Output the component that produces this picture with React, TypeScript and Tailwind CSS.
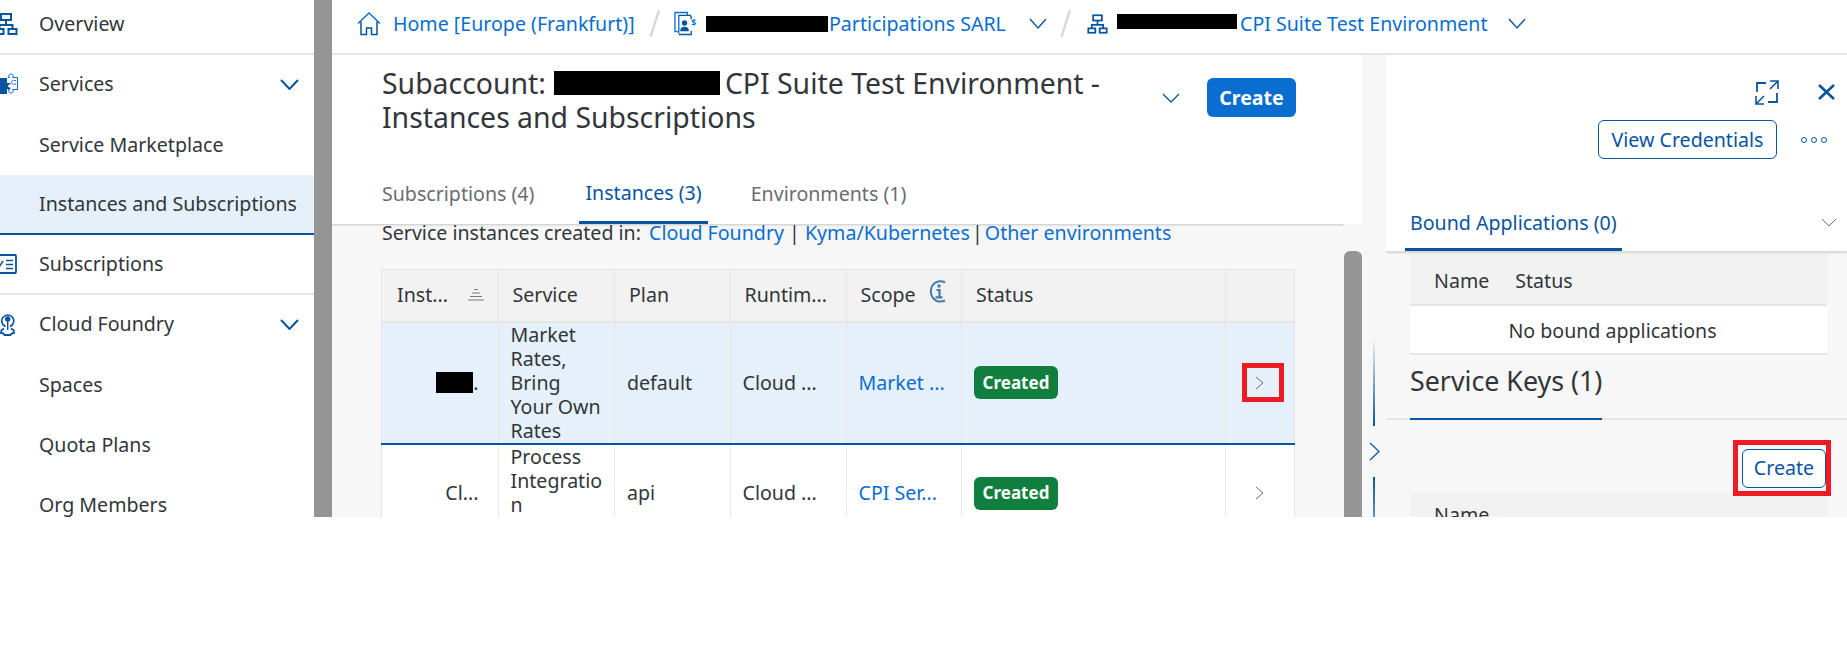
// drawn icons, SAP icon font isn't available
function Chevron({ w, h, down = true, color = "#0854a0", sw = 1.3, className = "" }: { w: number; h: number; down?: boolean; color?: string; sw?: number; className?: string }) {
  const d = down ? `M1 1L${w / 2} ${h - 1}L${w - 1} 1` : `M1 1L${w - 1} ${h / 2}L1 ${h - 1}`;
  return (
    <svg width={w} height={h} viewBox={`0 0 ${w} ${h}`} fill="none" stroke={color} strokeWidth={sw} className={`shrink-0 ${className}`}>
      <path d={d} />
    </svg>
  );
}

function TreeIcon({ className }: { className?: string }) {
  return (
    <svg viewBox="0 0 24 24" fill="none" stroke="#0854a0" strokeWidth="2" className={className}>
      <rect x="7" y="2" width="10" height="6" />
      <path d="M12 8v5M5.500 17v-4h13v4" />
      <rect x="1.500" y="17" width="8" height="5" />
      <rect x="14.500" y="17" width="8" height="5" />
    </svg>
  );
}

function PuzzleIcon() {
  return (
    <svg viewBox="0 0 24 24" className="w-[24px] h-[24px] -ml-[6px] mr-[21px] shrink-0" fill="none" stroke="#0a6ed1" strokeWidth="1">
      <path d="M14 5.500h1.300a2.200 2.200 0 1 1 3.400 0h4.800v12h-4.800a2.200 2.200 0 1 1-3.400 0H14" />
      <path d="M22 8.500h-1.500a2 2 0 1 0 0 3.500H22" />
      <path d="M0 6h13v5h3.500v1.500H15a2 2 0 0 0 0 3h1.500V17H13v5H0z" fill="#0854a0" stroke="none" />
    </svg>
  );
}

function ChecklistIcon() {
  return (
    <svg viewBox="0 0 24 20" className="w-[24px] h-[20px] -ml-[7px] mr-[22px] shrink-0" fill="none" stroke="#0854a0" strokeWidth="1.800">
      <rect x="1" y="1" width="22" height="18" rx="1" />
      <path d="M3 11l2.500 3L10 7M13 6.500h7M13 10.500h7M13 14.500h7" strokeWidth="1.500" />
    </svg>
  );
}

function CloudFoundryIcon() {
  return (
    <svg viewBox="0 0 16 24" className="w-[16px] h-[24px] mr-[23px] shrink-0" fill="none" stroke="#0854a0" strokeWidth="1.600">
      <path d="M5.500 14.500A6 6 0 1 1 10 14.500" />
      <circle cx="7.700" cy="7" r="2.700" fill="#0854a0" stroke="none" />
      <path d="M7.700 9v9" strokeWidth="1.400" />
      <path d="M4 16.500l-2.500 1.500-.5 3 2.500.5 1 1.500h6l1-1.500 2.500-.5-.5-3-2.500-1.500" strokeWidth="1.800" />
    </svg>
  );
}

function HomeIcon() {
  return (
    <svg viewBox="0 0 24 25" className="w-[24px] h-[25px] shrink-0" fill="none" stroke="#0a6ed1" strokeWidth="1.500">
      <path d="M1 12.500L12 2l11 10.500" />
      <path d="M4 10.500V23.500h5.500V17h5v6.500H20V10.500" stroke="#0854a0" />
    </svg>
  );
}

function AccountIcon() {
  return (
    <svg viewBox="0 0 24 25" className="w-[23px] h-[25px] shrink-0" fill="none" stroke="#0854a0" strokeWidth="1.400">
      <path d="M5 23V4h-.5M4 21H1V1h13v3" stroke="#0a6ed1" />
      <path d="M5 4h12l1 2v2M5 24h13v-4" />
      <circle cx="11" cy="12" r="2.800" fill="#0854a0" stroke="none" />
      <path d="M6.500 20.500c0-3.500 2-4.500 4.500-4.500s4.500 1 4.500 4.500z" fill="#0854a0" stroke="none" />
      <text x="18" y="15" fontSize="9" fontWeight="700" fill="#0a6ed1" stroke="none" fontFamily="Noto Sans, sans-serif">$</text>
    </svg>
  );
}

function InfoIcon() {
  return (
    <svg viewBox="0 0 20 24" className="w-[20px] h-[24px] shrink-0" fill="none" stroke="#427cac" strokeWidth="2">
      <path d="M18 2.500A9.500 9.500 0 0 0 4 10c-1 6 3.500 11 8 11.500 2 .2 4-.1 6-1" />
      <circle cx="12" cy="6" r="1.700" fill="#427cac" stroke="none" />
      <path d="M9.500 10h3v7M8.500 17.300h7" strokeWidth="2.200" />
    </svg>
  );
}

function SortIcon() {
  return (
    <svg viewBox="0 0 16 12" className="w-[16px] h-[12px] shrink-0" fill="none" stroke="#6a6d70" strokeWidth="0.900">
      <path d="M6 .5h4M4 4h8M2 7.500h12M0 11h16" />
    </svg>
  );
}

function ExpandIcon() {
  return (
    <svg viewBox="0 0 24 25" className="w-[24px] h-[25px] shrink-0" fill="none" stroke="#0854a0" strokeWidth="1.800">
      <path d="M11 3H2v9M13 22h9v-9" />
      <path d="M15 1h8v8M23 1l-8 8M1 16v8h8M1 24l8-8" strokeWidth="1.600" />
    </svg>
  );
}

function CloseIcon() {
  return (
    <svg viewBox="0 0 17 16" className="w-[17px] h-[16px] shrink-0" fill="none" stroke="#0854a0" strokeWidth="2.600">
      <path d="M1 1l15 14M16 1L1 15" />
    </svg>
  );
}

function Slash() {
  return (
    <svg viewBox="0 0 11 27" className="w-[11px] h-[27px] shrink-0">
      <path d="M10 0L1.500 27" stroke="#d9d9d9" strokeWidth="2.500" />
    </svg>
  );
}

function SideRow({ label, icon, open, selected, border }: { label: string; icon?: React.ReactNode; open?: boolean; selected?: boolean; border?: boolean }) {
  return (
    <div className={`flex items-center h-[60px] shrink-0 pr-[15px] ${icon ? "" : "pl-[39px]"} ${open ? "pb-[2px]" : ""} ${selected ? "bg-[#e5f0fa] border-b-2 border-[#0854a0]" : ""} ${border ? "border-b-2 border-[#e5e5e5]" : ""}`}>
      {icon}
      <span className="flex-1 whitespace-nowrap">{label}</span>
      {open && <Chevron w={19} h={11} sw={2} />}
    </div>
  );
}

function Sidebar() {
  return (
    <div className="w-[314px] shrink-0 flex flex-col overflow-hidden bg-white">
      <div className="flex items-center h-[55px] shrink-0 pb-[6px] border-b-2 border-[#e5e5e5]">
        <TreeIcon className="w-[24px] h-[24px] -ml-[6px] mr-[21px] shrink-0" />
        <span>Overview</span>
      </div>
      <SideRow label="Services" icon={<PuzzleIcon />} open />
      <SideRow label="Service Marketplace" />
      <SideRow label="Instances and Subscriptions" selected />
      <SideRow label="Subscriptions" icon={<ChecklistIcon />} border />
      <SideRow label="Cloud Foundry" icon={<CloudFoundryIcon />} open />
      <SideRow label="Spaces" />
      <SideRow label="Quota Plans" />
      <SideRow label="Org Members" />
    </div>
  );
}

function Breadcrumbs() {
  return (
    <div className="h-[55px] shrink-0 flex items-center pl-[25px] pb-[6px] border-b-2 border-[#e5e5e5] text-[#0a6ed1] bg-white whitespace-nowrap">
      <HomeIcon />
      <span className="ml-[12px] w-[240px]">Home [Europe (Frankfurt)]</span>
      <span className="ml-[16px]"><Slash /></span>
      <span className="ml-[14px]"><AccountIcon /></span>
      <span className="ml-[9px] inline-block w-[122px] h-[16px] bg-black" />
      <span className="ml-[1px] w-[181px]">Participations SARL</span>
      <Chevron w={18} h={11} className="ml-[19px]" />
      <span className="ml-[13px]"><Slash /></span>
      <TreeIcon className="ml-[16px] w-[21px] h-[24px] shrink-0" />
      <span className="ml-[9px] inline-block w-[120px] h-[15px] bg-black -translate-y-[2px]" />
      <span className="ml-[3px] w-[250px]">CPI Suite Test Environment</span>
      <Chevron w={18} h={11} className="ml-[18px]" />
    </div>
  );
}

function Badge() {
  return (
    <span className="inline-flex items-center justify-center w-[84px] h-[33px] rounded-[6px] bg-[#107e3e] text-white font-bold text-[17px]">Created</span>
  );
}

const cell = "border-r border-[#e5e5e5] align-middle";

function InstancesTable() {
  return (
    <table className="table-fixed border-collapse w-[914px] border-l border-r border-[#e5e5e5]">
      <colgroup>
        <col className="w-[116.500px]" />
        <col className="w-[116.500px]" />
        <col className="w-[115.500px]" />
        <col className="w-[116px]" />
        <col className="w-[115.500px]" />
        <col className="w-[263.500px]" />
        <col />
      </colgroup>
      <thead>
        <tr className="h-[52px] bg-[#f2f2f2] border-t border-b-2 border-[#e5e5e5] text-left">
          <th className={`${cell} font-normal pl-[15px] pr-[14px]`}>
            <div className="flex items-center justify-between"><span>Inst...</span><SortIcon /></div>
          </th>
          <th className={`${cell} font-normal pl-[14px]`}>Service</th>
          <th className={`${cell} font-normal pl-[14px]`}>Plan</th>
          <th className={`${cell} font-normal pl-[14px]`}>Runtim...</th>
          <th className={`${cell} font-normal pl-[14px]`}>
            <div className="flex items-center gap-[11px]"><span>Scope</span><span className="-mt-[6px]"><InfoIcon /></span></div>
          </th>
          <th className={`${cell} font-normal pl-[14px]`}>Status</th>
          <th />
        </tr>
      </thead>
      <tbody>
        <tr className="h-[122px] bg-[#e5f0fa] border-b-2 border-[#0854a0]">
          <td className={`${cell} pr-[19px] text-right`}>
            <div className="flex items-center justify-end">
              <span className="inline-block w-[37px] h-[21px] bg-black" />
              <span>.</span>
            </div>
          </td>
          <td className={`${cell} pl-[12px] pr-[8px]`}>Market Rates, Bring Your Own Rates</td>
          <td className={`${cell} pl-[12px]`}>default</td>
          <td className={`${cell} pl-[12px]`}>Cloud ...</td>
          <td className={`${cell} pl-[12px] text-[#0a6ed1]`}>Market ...</td>
          <td className={`${cell} pl-[12px]`}><Badge /></td>
          <td className="align-middle">
            <div className="flex justify-center">
              <span className="ml-[6px] pr-[6px] flex items-center justify-center w-[42px] h-[39px] border-[5px] border-[#ed1c24]">
                <Chevron w={9} h={14} down={false} color="#6a6d70" sw={1} />
              </span>
            </div>
          </td>
        </tr>
        <tr className="h-[98px] bg-white">
          <td className={`${cell} pr-[19px] text-right`}>Cl...</td>
          <td className={`${cell} pl-[12px] pr-[8px] !align-top`}>Process Integratio<br />n</td>
          <td className={`${cell} pl-[12px]`}>api</td>
          <td className={`${cell} pl-[12px]`}>Cloud ...</td>
          <td className={`${cell} pl-[12px] text-[#0a6ed1]`}>CPI Ser...</td>
          <td className={`${cell} pl-[12px]`}><Badge /></td>
          <td className="align-middle">
            <div className="flex justify-center">
              <Chevron w={9} h={14} down={false} color="#6a6d70" sw={1} />
            </div>
          </td>
        </tr>
      </tbody>
    </table>
  );
}

function InstancesPane() {
  return (
    <div className="w-[1012px] shrink-0 flex flex-col bg-[#f7f7f7] overflow-hidden">
      <div className="relative z-10 h-[169px] shrink-0 bg-white shadow-[0_1px_2px_rgba(0,0,0,0.2)] pl-[50px]">
        <div className="flex items-start pt-[11px] h-[110px]">
          <div className="w-[780px] text-[28.400px] leading-[34px]">
            <div className="flex items-center whitespace-nowrap">
              <span>Subaccount:</span>
              <span className="ml-[8px] inline-block w-[166px] h-[24px] bg-black" />
              <span className="ml-[5px]">CPI Suite Test Environment -</span>
            </div>
            <div className="whitespace-nowrap">Instances and Subscriptions</div>
          </div>
          <Chevron w={18} h={10} className="mt-[27px]" />
          <button className="ml-[27px] mt-[12px] w-[89px] h-[39px] rounded-[6px] bg-[#0a6ed1] text-white font-bold">Create</button>
        </div>
        <div className="flex h-[59px] items-stretch">
          <div className="flex items-center pb-[1px] text-[#6a6d70] whitespace-nowrap">Subscriptions (4)</div>
          <div className="ml-[45px] flex items-center px-[6px] text-[#0854a0] border-b-[3px] border-[#0854a0] whitespace-nowrap">Instances (3)</div>
          <div className="ml-[43px] flex items-center pb-[1px] text-[#6a6d70] whitespace-nowrap">Environments (1)</div>
        </div>
      </div>
      <div className="shrink-0 pl-[50px] -mt-[3px] mb-[24px] leading-[24px] whitespace-nowrap">
        Service instances created in: <span className="ml-[3px] text-[#0a6ed1]">Cloud Foundry</span> | <span className="text-[#0a6ed1]">Kyma/Kubernetes</span> <span className="-ml-[3px]">|</span> <span className="-ml-[3px] text-[#0a6ed1]">Other environments</span>
      </div>
      <div className="shrink-0 pl-[49px]">
        <InstancesTable />
      </div>
    </div>
  );
}

function Splitter() {
  return (
    <div className="w-[24px] shrink-0 bg-[#f7f7f7] flex flex-col items-center pt-[282px]">
      <div className="w-[2px] h-[89px] shrink-0 bg-gradient-to-b from-transparent to-[#0854a0]" />
      <div className="h-[51px] shrink-0 flex items-center">
        <Chevron w={11} h={19} down={false} sw={1.2} />
      </div>
      <div className="w-[2px] h-[40px] shrink-0 bg-gradient-to-b from-[#0854a0] to-[#5a93c8]" />
    </div>
  );
}

function DetailPane() {
  return (
    <div className="flex-1 flex flex-col bg-[#f7f7f7] overflow-hidden">
      <div className="relative z-10 h-[197px] shrink-0 bg-white border-b border-[#d9d9d9] shadow-[0_1px_2px_rgba(0,0,0,0.15)] flex flex-col">
        <div className="flex items-center justify-end h-[50px] pt-[24px] pr-[12px]">
          <ExpandIcon />
          <span className="ml-[39px]"><CloseIcon /></span>
        </div>
        <div className="flex items-center justify-end mt-[15px] pr-[20px]">
          <button className="w-[179px] h-[39px] rounded-[6px] border border-[#0854a0] text-[#0854a0] bg-white">View Credentials</button>
          <span className="ml-[24px] flex gap-[4px]">
            <span className="w-[6px] h-[6px] rounded-full border-[1.500px] border-[#0854a0]" />
            <span className="w-[6px] h-[6px] rounded-full border-[1.500px] border-[#0854a0]" />
            <span className="w-[6px] h-[6px] rounded-full border-[1.500px] border-[#0854a0]" />
          </span>
        </div>
        <div className="flex mt-[auto] justify-between items-stretch h-[60px] pl-[20px] pr-[10px]">
          <div className="flex items-center pt-[6px] px-[5px] -ml-[1px] text-[#0854a0] border-b-[3px] border-[#0854a0] whitespace-nowrap">Bound Applications (0)</div>
          <span className="self-center pt-[2px]"><Chevron w={16} h={9} color="#6a6d70" sw={1} /></span>
        </div>
      </div>
      <div className="shrink-0 pl-[24px] pr-[20px] pt-[2px]">
        <div className="h-[52px] pt-[3px] bg-[#f2f2f2] border-b-2 border-[#e5e5e5] flex items-center pl-[24px] gap-[26px]">
          <span>Name</span><span>Status</span>
        </div>
        <div className="h-[49px] pt-[2px] pr-[12px] bg-white border-b-2 border-[#e5e5e5] flex items-center justify-center">No bound applications</div>
      </div>
      <div className="shrink-0 border-b-2 border-[#e5e5e5] h-[65px] flex items-stretch pl-[24px]">
        <div className="flex items-center pb-[12px] text-[26.800px] border-b-2 -mb-[2px] border-[#0854a0] whitespace-nowrap">Service Keys (1)</div>
      </div>
      <div className="shrink-0 flex justify-end pr-[16px] pt-[20px]">
        <div className="relative w-[98px] h-[56px] border-[5px] border-[#ed1c24] flex items-center justify-end">
          <button className="w-[84px] h-[39px] rounded-[6px] border border-[#0854a0] text-[#0854a0] bg-white shrink-0">Create</button>
        </div>
      </div>
      <div className="shrink-0 ml-[24px] mr-[20px] h-[40px] -mt-[4px] bg-[#f2f2f2] pl-[24px] pt-[11px]">Name</div>
    </div>
  );
}

export default function App() {
  return (
    <div className="h-[648px] bg-white font-['Noto_Sans',sans-serif] text-[19.600px] leading-[24px] text-[#32363a]">
      <div className="flex h-[517px] overflow-hidden">
        <Sidebar />
        <div className="w-[18px] shrink-0 bg-[#959595]" />
        <div className="flex-1 flex flex-col min-w-0">
          <Breadcrumbs />
          <div className="flex flex-1 min-h-0">
            <InstancesPane />
            <div className="w-[18px] shrink-0 flex flex-col">
              <div className="h-[169px] shrink-0 bg-white" />
              <div className="h-[27px] shrink-0 bg-[#f7f7f7]" />
              <div className="flex-1 bg-[#959595] rounded-t-[6px]" />
            </div>
            <Splitter />
            <DetailPane />
          </div>
        </div>
      </div>
    </div>
  );
}
